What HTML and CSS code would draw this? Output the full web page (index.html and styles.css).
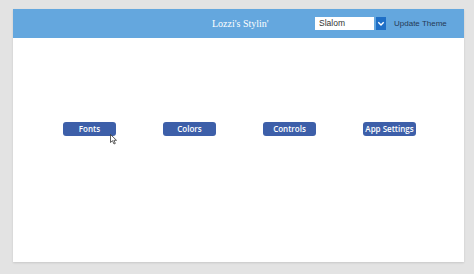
FILE: index.html
```html
<!DOCTYPE html>
<html>
<head>
<meta charset="utf-8">
<link rel="stylesheet" href="styles.css">
</head>
<body>
<div class="app">
  <div class="header">
    <div class="title">Lozzi's Stylin'</div>
    <div class="controls">
      <div class="select">
        <span class="select-text">Slalom</span>
        <span class="chev"><svg width="10" height="13" viewBox="0 0 10 13"><path d="M2.3 5.3 L5 8 L7.7 5.3" fill="none" stroke="#fff" stroke-width="1.4"/></svg></span>
      </div>
      <div class="update">Update Theme</div>
    </div>
  </div>
  <div class="body">
    <div class="btn">Fonts</div>
    <div class="btn">Colors</div>
    <div class="btn">Controls</div>
    <div class="btn">App Settings</div>
  </div>
</div>
<svg class="cursor" width="8" height="11" viewBox="0 0 8 11"><path d="M0.5 0.5 L0.5 8.5 L2.5 6.7 L4 10 L5.3 9.4 L3.9 6.3 L6.5 6.3 Z" fill="#fff" stroke="#333" stroke-width="0.8"/></svg>
</body>
</html>
```
FILE: styles.css
```css
html, body {
  margin: 0;
  padding: 0;
}
body {
  width: 474px;
  height: 274px;
  background: #e3e3e3;
  padding: 9px 10px 0 13px;
  box-sizing: border-box;
  position: relative;
  overflow: hidden;
}
.app {
  width: 451px;
  height: 253px;
  background: #fff;
  box-shadow: 0 1px 2px rgba(0,0,0,0.12);
  display: flex;
  flex-direction: column;
}
.header {
  height: 29px;
  background: #64a7de;
  display: flex;
  align-items: center;
}
.title {
  font-family: "Liberation Serif", serif;
  color: #fff;
  font-size: 10px;
  margin-left: 199px;
  width: 54px;
  white-space: nowrap;
}
.controls {
  display: flex;
  align-items: center;
  margin-left: 49px;
}
.select {
  display: flex;
  align-items: center;
  height: 13px;
}
.select-text {
  width: 56px;
  height: 13px;
  background: #fff;
  font-family: "Liberation Sans", sans-serif;
  font-size: 8.5px;
  color: #333;
  line-height: 13px;
  padding-left: 4px;
  box-sizing: border-box;
  width: 59px;
}
.chev {
  width: 10px;
  height: 13px;
  background: #1f6fc6;
  margin-left: 2px;
  display: flex;
}
.update {
  font-family: "Liberation Sans", sans-serif;
  font-size: 8px;
  color: #253a55;
  margin-left: 8px;
  white-space: nowrap;
}
.body {
  flex: 1;
  display: flex;
  justify-content: flex-start;
  align-items: flex-start;
  gap: 47px;
  padding-top: 84px;
  padding-left: 50px;
}
.btn {
  width: 53px;
  height: 14px;
  background: #3d5fa9;
  border-radius: 3px;
  color: #fff;
  font-family: "Open Sans", sans-serif;
  font-weight: 600;
  font-size: 8px;
  line-height: 14px;
  text-align: center;
  white-space: nowrap;
}
.cursor {
  position: absolute;
  left: 110px;
  top: 134px;
}
```
